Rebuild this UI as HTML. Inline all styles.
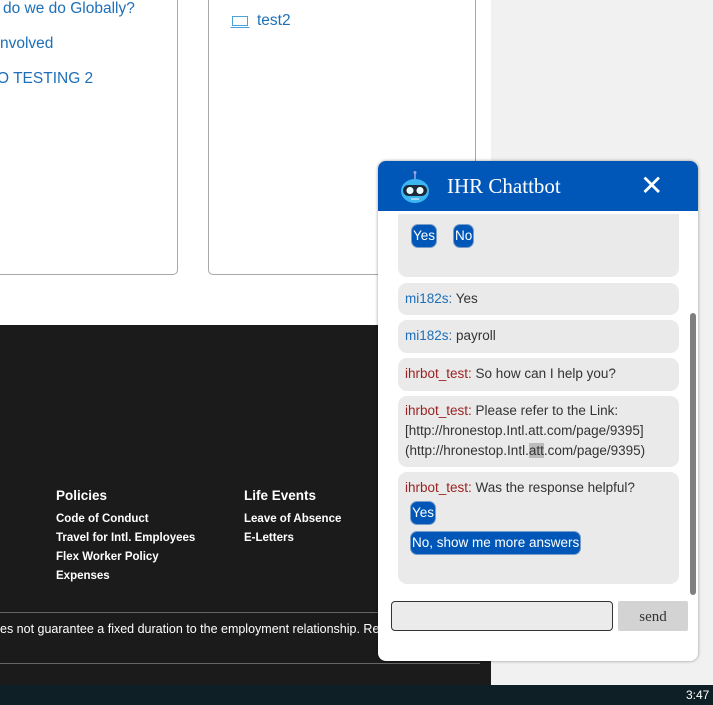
<!DOCTYPE html>
<html><head><meta charset="utf-8"><style>
*{margin:0;padding:0;box-sizing:border-box}
body{width:713px;height:705px;overflow:hidden;position:relative;background:#fff;font-family:"Liberation Sans",sans-serif}
.a{position:absolute}
.card{position:absolute;border:1px solid #a8a8a8;border-top:none;border-radius:0 0 5px 5px}
.lk{position:absolute;color:#1d6fb8;font-size:15.5px;white-space:nowrap}
.ft{position:absolute;color:#fff;font-size:11.5px;font-weight:bold;white-space:nowrap;line-height:19px}
.bub{position:absolute;left:398px;width:281px;background:#eaeaea;border-radius:9px;font-size:13.5px;color:#333;padding:0 7px;line-height:20px;white-space:nowrap}
.u{color:#1d6fb8}.b{color:#9b2222}
.btn{position:absolute;background:#0057b8;color:#fff;font-size:13.5px;border-radius:7px;border:1px solid #7a9cc8;padding:0 1px;line-height:21px;height:24px;white-space:nowrap}
</style></head><body>
<div class="a" style="left:491px;top:0;width:222px;height:685px;background:#f1f1f1"></div>
<div class="card" style="left:-10px;top:-5px;width:188px;height:280px"></div>
<div class="card" style="left:208px;top:-5px;width:268px;height:280px"></div>
<div class="lk" style="left:3px;top:0px">do we do Globally?</div>
<div class="lk" style="left:0;top:35px">nvolved</div>
<div class="lk" style="left:-3px;top:70px">O TESTING 2</div>
<svg class="a" style="left:230px;top:15px" width="20" height="14" viewBox="0 0 20 14"><rect x="2.5" y="1.5" width="15" height="9" fill="none" stroke="#4aa3d8"/><path d="M0.5 12.5h19" stroke="#4aa3d8"/></svg>
<div class="lk" style="left:257px;top:12px">test2</div>
<div class="a" style="left:0;top:325px;width:491px;height:360px;background:#1b1b1b"></div>
<div class="ft" style="left:56px;top:486px;font-size:13.5px">Policies</div>
<div class="ft" style="left:244px;top:486px;font-size:13.5px">Life Events</div>
<div class="ft" style="left:56px;top:510px">Code of Conduct<br>Travel for Intl. Employees<br>Flex Worker Policy<br>Expenses</div>
<div class="ft" style="left:244px;top:510px">Leave of Absence<br>E-Letters</div>
<div class="a" style="left:0;top:612px;width:480px;height:1px;background:#666"></div>
<div class="ft" style="left:0;top:620px;font-weight:normal;font-size:12.5px">es not guarantee a fixed duration to the employment relationship. Re</div>
<div class="a" style="left:0;top:663px;width:480px;height:1px;background:#666"></div>
<div class="a" style="left:0;top:685px;width:713px;height:20px;background:#0f1f26"></div>
<div class="a" style="left:686px;top:688px;color:#fff;font-size:12px;white-space:nowrap">3:47 P</div>

<div class="a" style="left:378px;top:161px;width:320px;height:500px;background:#fff;border-radius:8px;box-shadow:0 0 3px rgba(0,0,0,.4);overflow:hidden">
<div class="a" style="left:0;top:0;width:320px;height:50px;background:#0057b8"></div>
<div class="a" style="left:69px;top:0;width:200px;line-height:50px;color:#fff;font-family:'Liberation Serif',serif;font-size:21px">IHR Chattbot</div>
<div class="a" style="left:262px;top:8px;color:#fff;font-size:28px;line-height:34px">✕</div>
<svg class="a" style="left:20px;top:9px" width="34" height="34" viewBox="0 0 34 34"><line x1="17" y1="2" x2="17" y2="9" stroke="#9ad" stroke-width="1.5"/><circle cx="17" cy="2.5" r="1.5" fill="#9ad"/><ellipse cx="17" cy="21" rx="14" ry="12" fill="#3bb6f0"/><rect x="5" y="15" width="24" height="11" rx="5.5" fill="#1a2a3a"/><circle cx="12" cy="20.5" r="3" fill="#dff" stroke="#fff"/><circle cx="22" cy="20.5" r="3" fill="#dff" stroke="#fff"/><path d="M13 29h8" stroke="#fff"/></svg>
</div>
<div class="bub" style="top:214px;height:63px;border-radius:0 0 9px 9px"></div>
<div class="btn" style="left:411px;top:224px">Yes</div>
<div class="btn" style="left:453px;top:224px">No</div>
<div class="bub" style="top:283px;height:32px;padding-top:6px"><span class="u">mi182s:</span> Yes</div>
<div class="bub" style="top:320px;height:33px;padding-top:6px"><span class="u">mi182s:</span> payroll</div>
<div class="bub" style="top:358px;height:33px;padding-top:6px"><span class="b">ihrbot_test:</span> So how can I help you?</div>
<div class="bub" style="top:396px;height:71px;padding-top:5px"><span class="b">ihrbot_test:</span> Please refer to the Link:<br>[http://hronestop.Intl.att.com/page/9395]<br>(http://hronestop.Intl.<span style="background:#bbb">att</span>.com/page/9395)</div>
<div class="bub" style="top:472px;height:112px;padding-top:6px"><span class="b">ihrbot_test:</span> Was the response helpful?</div>
<div class="btn" style="left:410px;top:501px">Yes</div>
<div class="btn" style="left:410px;top:531px">No, show me more answers</div>
<div class="a" style="left:690px;top:313px;width:6px;height:282px;background:#808080;border-radius:3px"></div>
<div class="a" style="left:391px;top:601px;width:222px;height:30px;background:#ebebeb;border:1px solid #333;border-radius:4px"></div>
<div class="a" style="left:618px;top:601px;width:70px;height:30px;background:#d3d3d3;border-radius:2px;font-family:'Liberation Serif',serif;font-size:15px;color:#333;text-align:center;line-height:32px">send</div>
</body></html>
